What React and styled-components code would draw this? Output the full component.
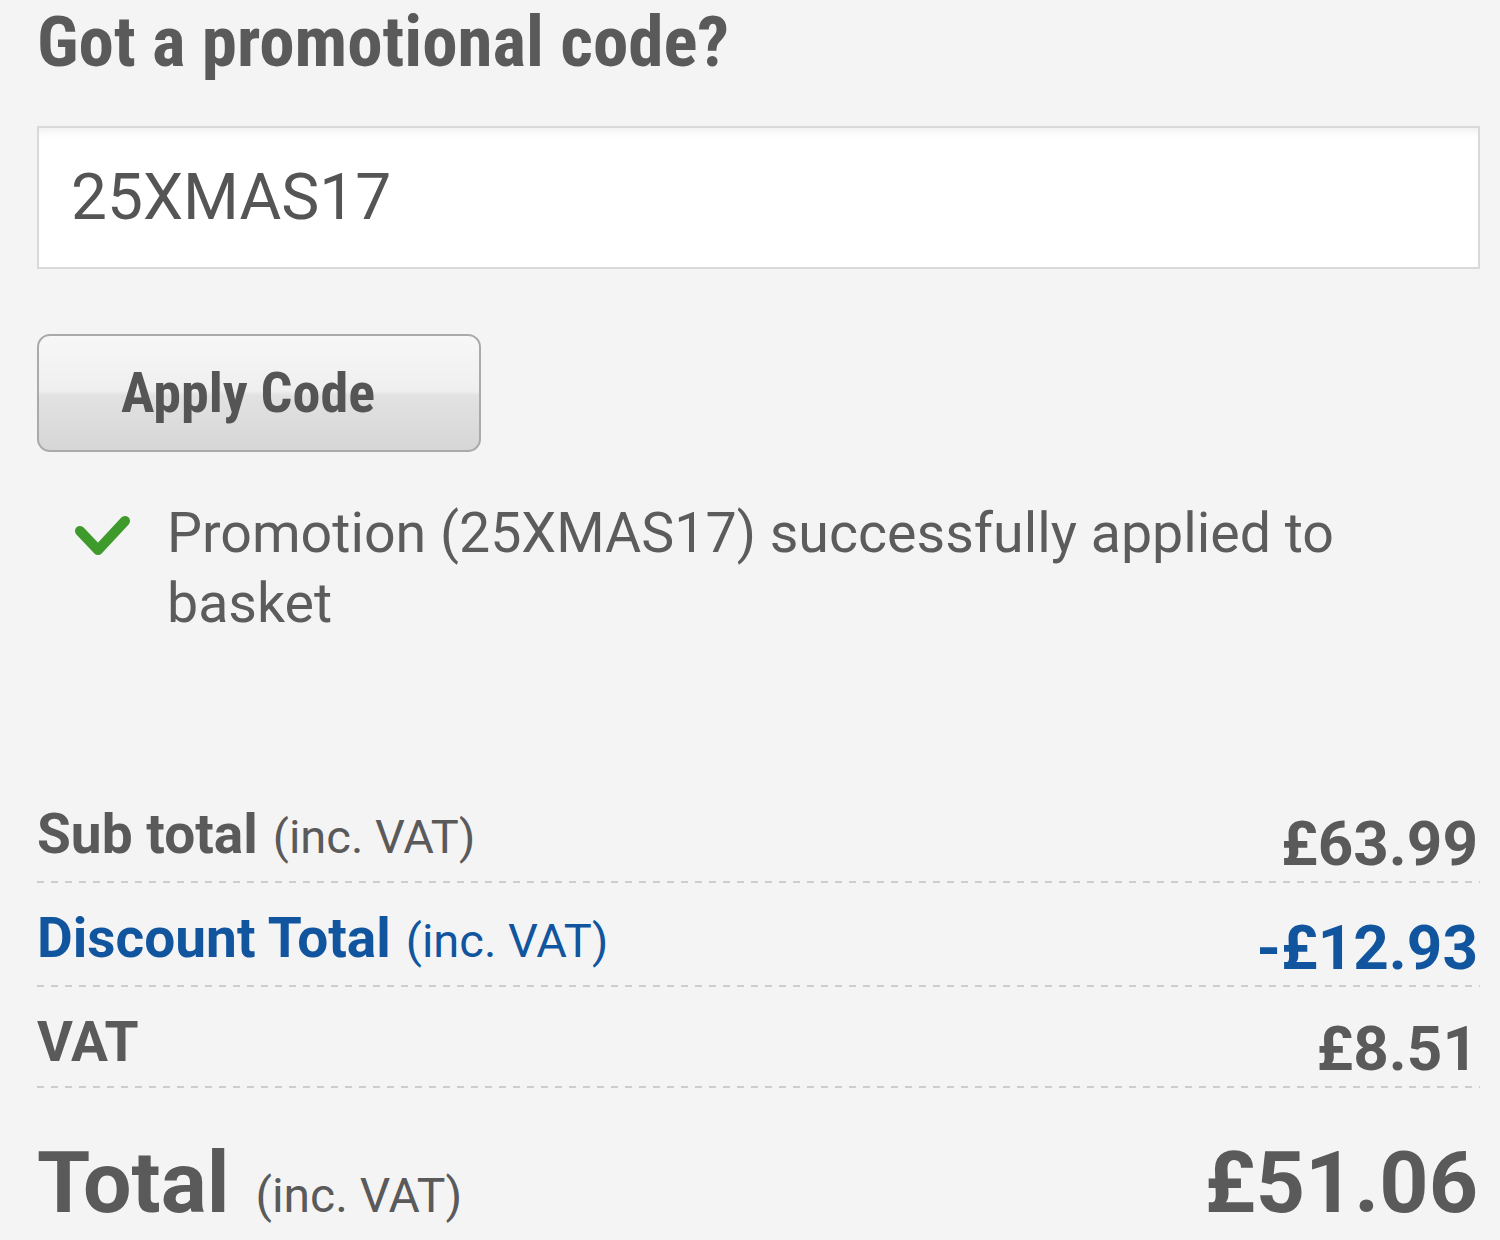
import React from 'react';
import styled, { createGlobalStyle } from 'styled-components';

const GlobalStyle = createGlobalStyle`
  html, body {
    margin: 0;
    padding: 0;
    background: #f4f4f4;
  }
  body {
    font-family: Roboto, "Liberation Sans", sans-serif;
    color: #5a5a5a;
  }
`;

const condensed = `
  font-family: "Roboto Condensed", Roboto, "Liberation Sans", sans-serif;
`;

const Page = styled.div`
  width: 1500px;
  height: 1240px;
  box-sizing: border-box;
  padding: 0 20px 0 37px;
  overflow: hidden;
`;

const Heading = styled.h2`
  ${condensed}
  margin: 0;
  font-size: 71px;
  line-height: 84px;
  font-weight: 700;
  color: #5a5a5a;
`;

const CodeInput = styled.input`
  display: block;
  box-sizing: border-box;
  width: 100%;
  height: 143px;
  margin: 42px 0 0;
  padding: 0 0 0 32px;
  border: 2px solid #d9d9d9;
  background: #fff;
  box-shadow: inset 0 8px 10px -6px rgba(0, 0, 0, 0.08);
  font-family: Roboto, "Liberation Sans", sans-serif;
  font-size: 64px;
  color: #555;
  outline: none;
`;

const ApplyButton = styled.button`
  ${condensed}
  display: block;
  box-sizing: border-box;
  width: 444px;
  height: 118px;
  margin-top: 65px;
  padding: 0 22px 0 0;
  border: 2px solid #aaaaaa;
  border-radius: 13px;
  background: linear-gradient(
    to bottom,
    #f7f7f7 0%,
    #efefef 48%,
    #e2e2e2 52%,
    #d6d6d6 100%
  );
  font-size: 56px;
  font-weight: 700;
  color: #555;
  cursor: pointer;
`;

const Message = styled.div`
  display: flex;
  align-items: flex-start;
  gap: 36px;
  margin-top: 47px;
  padding-left: 38px;
`;

const CheckIcon = styled.svg`
  flex: none;
  margin-top: 16px;
`;

const MessageText = styled.p`
  margin: 0;
  font-size: 55.5px;
  line-height: 70px;
  color: #5c5c5c;
`;

const Totals = styled.div`
  margin-top: 165px;
`;

const Row = styled.div`
  display: flex;
  justify-content: space-between;
  align-items: ${(p) => (p.$grand ? 'baseline' : 'flex-end')};
  padding: ${(p) => (p.$grand ? '20px 2px 0 0' : '0 2px 14px 0')};
  color: ${(p) => (p.$blue ? '#12559f' : '#5a5a5a')};
`;

const Dash = styled.div`
  height: 2px;
  margin-bottom: 25px;
  background: repeating-linear-gradient(
    to right,
    #cdcdcd 0 7px,
    transparent 7px 14px
  );
`;

const Label = styled.div`
  font-family: Roboto, "Liberation Sans", sans-serif;
  font-size: ${(p) => (p.$grand ? '86px' : '55px')};
  line-height: ${(p) => (p.$grand ? '100px' : '60px')};
  font-weight: 700;
  white-space: nowrap;
`;

const Note = styled.span`
  font-family: Roboto, "Liberation Sans", sans-serif;
  font-size: ${(p) => (p.$grand ? '48px' : '47px')};
  font-weight: 400;
  margin-left: ${(p) => (p.$grand ? '26px' : '15px')};
`;

const Price = styled.div`
  font-family: Roboto, "Liberation Sans", sans-serif;
  font-size: ${(p) => (p.$grand ? '86px' : '62px')};
  line-height: ${(p) => (p.$grand ? '100px' : '46px')};
  font-weight: 700;
  white-space: nowrap;
`;

const rows = [
  { label: 'Sub total', note: true, price: '£63.99' },
  { label: 'Discount Total', note: true, price: '-£12.93', blue: true },
  { label: 'VAT', note: false, price: '£8.51' },
];

export default function App() {
  return (
    <>
      <GlobalStyle />
      <Page>
        <Heading>Got a promotional code?</Heading>
        <CodeInput type="text" value="25XMAS17" readOnly />
        <ApplyButton type="button">Apply Code</ApplyButton>
        <Message>
          <CheckIcon width="56" height="44" viewBox="0 0 56 44">
            <polyline
              points="5,16 23,35 50,6"
              fill="none"
              stroke="#3f9a2c"
              strokeWidth="10"
              strokeLinecap="round"
              strokeLinejoin="round"
            />
          </CheckIcon>
          <MessageText>
            Promotion (25XMAS17) successfully applied to basket
          </MessageText>
        </Message>
        <Totals>
          {rows.map((r) => (
            <React.Fragment key={r.label}>
              <Row $blue={r.blue}>
                <Label>
                  {r.label}
                  {r.note && <Note>(inc. VAT)</Note>}
                </Label>
                <Price>{r.price}</Price>
              </Row>
              <Dash />
            </React.Fragment>
          ))}
          <Row $grand>
            <Label $grand>
              Total
              <Note $grand>(inc. VAT)</Note>
            </Label>
            <Price $grand>£51.06</Price>
          </Row>
        </Totals>
      </Page>
    </>
  );
}
